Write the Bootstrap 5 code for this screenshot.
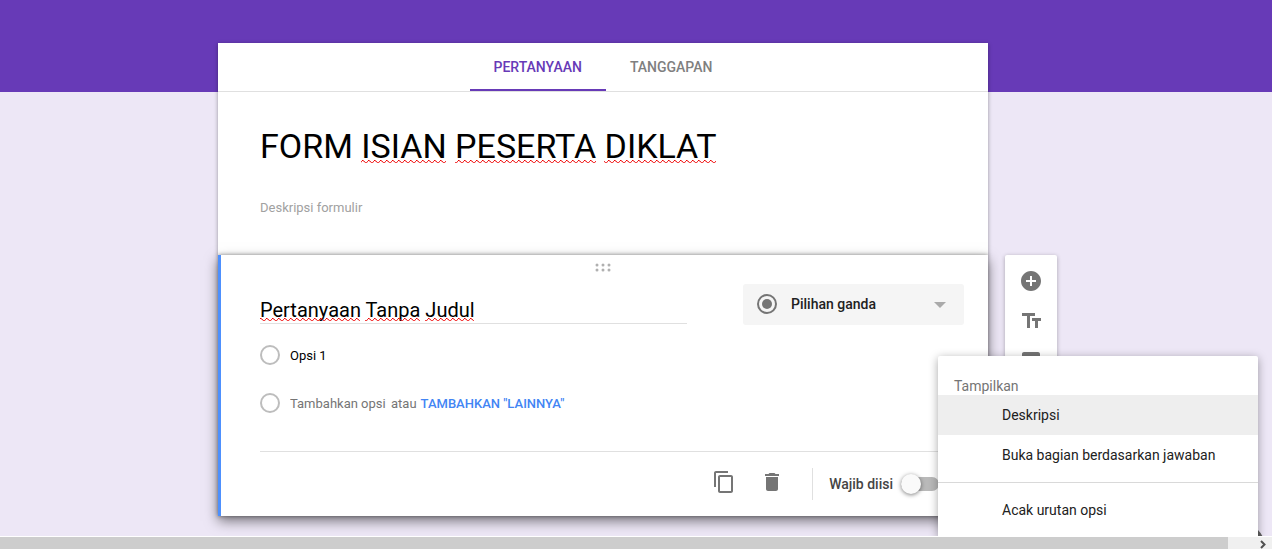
<!DOCTYPE html>
<html lang="id">
<head>
<meta charset="utf-8">
<meta name="viewport" content="width=device-width, initial-scale=1">
<title>Form Isian Peserta Diklat</title>
<link href="https://cdn.jsdelivr.net/npm/bootstrap@5.3.0/dist/css/bootstrap.min.css" rel="stylesheet">
<style>
  body { font-family: Roboto, "Liberation Sans", sans-serif; font-size: 13px; line-height: 20px; color: #212121; background: #ede7f6; }
  svg { display: block; }
  .workspace { background: linear-gradient(#673ab7 92px, #ede7f6 92px); padding-top: 43px; }
  .editor { gap: 17px; padding-left: 3px; }
  .form-column { flex: 0 1 770px; min-width: 0; }
  .form-sheet { background: #fff; box-shadow: 0 1px 4px rgba(0,0,0,.37); }
  .mode-tabs { height: 49px; border-bottom: 1px solid #e0e0e0; }
  .mode-tabs .nav-link { font-size: 14px; font-weight: 500; color: #7f7f7f; padding: 14px 24px 12px; border-bottom: 2px solid transparent; border-radius: 0; }
  .mode-tabs .nav-link.active { color: #673ab7; border-color: #673ab7; }
  .form-head { padding: 30px 42px 37px; }
  .plain-field { display: block; width: 100%; border: 0; padding: 0; background: none; outline: 0; color: #000; }
  .form-title { font-size: 34px; line-height: 48px; height: 48px; }
  .form-desc { font-size: 13px; height: 20px; margin-top: 28px; }
  .form-desc::placeholder { color: #a1a1a1; opacity: 1; }
  .spell { position: absolute; left: 0; bottom: 0; pointer-events: none; }
  .question-card { background: #fff; border-left: 3px solid #4d90fe; padding: 29px 24px 0 39px; box-shadow: 0 0 4px rgba(0,0,0,.4), 0 5px 12px rgba(0,0,0,.5); }
  .drag-handle { position: absolute; top: 8px; left: 0; right: 3px; }
  .question-text { flex: 0 1 427px; margin-top: 14px; border-bottom: 1px solid #e0e0e0; }
  .question-title { font-size: 20px; line-height: 24px; height: 25px; padding-bottom: 2px; }
  .kind { flex: 0 0 221px; height: 41px; }
  .kind select { appearance: none; width: 100%; height: 100%; border: 0; border-radius: 3px; background: #f5f5f5; font-size: 14px; font-weight: 500; color: #212121; padding: 0 48px 2px; }
  .kind svg { position: absolute; pointer-events: none; }
  .kind .kind-icon { left: 14px; top: 10px; }
  .kind .kind-arrow { right: 18px; top: 18px; }
  .option { gap: 10px; height: 20px; }
  .options { gap: 28px; padding-top: 20px; }
  .option input[type=radio] { appearance: none; width: 20px; height: 20px; margin: 0; border: 2px solid #bdbdbd; border-radius: 50%; background: #fff; opacity: 1; }
  .option .plain-field { width: 97px; line-height: 20px; }
  .option-text { padding-top: 2px; }
  .option .add-field::placeholder { color: #757575; opacity: 1; }
  .add-or { color: #757575; padding: 0 4px; }
  .option a { color: #4285f4; font-weight: 500; }
  .card-tools { height: 65px; margin: 38px 0 0; border-top: 1px solid #e0e0e0; padding-right: 25px; }
  .tool-btn { border: 0; background: none; padding: 0; width: 24px; height: 24px; }
  .rule-v { width: 1px; height: 32px; background: #e0e0e0; margin: 0 16px 0 28px; }
  .required-label { font-size: 14px; font-weight: 500; color: #444; }
  .toggle { appearance: none; position: relative; width: 38px; height: 20px; margin: 0; }
  .toggle::before { content: ""; position: absolute; inset: 3px 0; background: #b9b9b9; border-radius: 7px; }
  .toggle::after { content: ""; position: absolute; left: 0; top: 0; width: 20px; height: 20px; border-radius: 50%; background: #fafafa; box-shadow: 0 1px 4px rgba(0,0,0,.5); }
  .side-tools { flex: 0 0 52px; margin-top: 212px; padding: 14px 0; gap: 16px; border-radius: 2px; background: #fff; box-shadow: 0 1px 4px rgba(0,0,0,.3); }
  .more-menu { position: absolute; z-index: 5; left: 717px; top: 101px; width: 320px; padding: 20px 0 8px; background: #fff; border-radius: 2px; box-shadow: 0 2px 10px rgba(0,0,0,.35); font-size: 14px; }
  .menu-caption { color: #757575; padding: 0 16px; height: 19px; }
  .more-menu button { display: block; width: 100%; height: 40px; border: 0; background: #fff; color: #212121; text-align: left; padding: 0 64px; white-space: nowrap; }
  .more-menu button.current { background: #eee; }
  .more-menu hr { margin: 7px 0; border-color: #d9d9d9; opacity: 1; }
  .help { position: absolute; right: 7px; bottom: -35px; width: 48px; height: 48px; border: 0; border-radius: 50%; background: #616161; }
  .h-scroll { height: 13px; border-top: 1px solid #fff; background: #f0f0f0; padding-right: 44px; }
  .h-scroll .thumb { width: 100%; background: #cdcdcd; }
  .h-scroll button { position: absolute; right: 0; top: 0; width: 17px; height: 12px; padding: 0; border: 0; background: none; }
</style>
</head>
<body>
<div class="vh-100 d-flex flex-column overflow-hidden">
  <main class="workspace flex-grow-1 overflow-hidden position-relative">
    <button class="help" type="button" aria-label="Bantuan"></button>
    <div class="editor d-flex justify-content-center align-items-start position-relative">
      <div class="form-column">
        <div class="form-sheet">
          <nav class="mode-tabs nav justify-content-center">
            <a class="nav-link active" href="#pertanyaan">PERTANYAAN</a>
            <a class="nav-link" href="#tanggapan">TANGGAPAN</a>
          </nav>
          <header class="form-head">
            <div class="position-relative">
              <input class="plain-field form-title" type="text" value="FORM ISIAN PESERTA DIKLAT" aria-label="Judul formulir" spellcheck="false">
              <svg class="spell" width="457" height="10" aria-hidden="true">
                <defs><pattern id="wave" width="6" height="3" patternUnits="userSpaceOnUse"><path d="M-1 .5H1L3.500 2.500H4.500L7 .5" fill="none" stroke="#e00" stroke-width="1"/></pattern></defs>
                <path d="M101 0H186V3H101zM195 0H336V3H195zM344 0H456V3H344z" fill="url(#wave)"/>
              </svg>
            </div>
            <input class="plain-field form-desc" type="text" placeholder="Deskripsi formulir" aria-label="Deskripsi formulir">
          </header>
        </div>
        <section class="question-card position-relative">
          <svg class="drag-handle mx-auto" width="16" height="9" viewBox="0 0 16 9" fill="#b0b0b0" aria-hidden="true"><circle cx="2" cy="2" r="1.500"/><circle cx="8" cy="2" r="1.500"/><circle cx="14" cy="2" r="1.500"/><circle cx="2" cy="7" r="1.500"/><circle cx="8" cy="7" r="1.500"/><circle cx="14" cy="7" r="1.500"/></svg>
          <div class="d-flex justify-content-between align-items-start">
            <div class="question-text position-relative">
              <input class="plain-field question-title" type="text" value="Pertanyaan Tanpa Judul" aria-label="Pertanyaan" spellcheck="false">
              <svg class="spell" width="215" height="5" aria-hidden="true"><path d="M0 0H100V3H0zM105 0H160V3H105zM165 0H214V3H165z" fill="url(#wave)"/></svg>
            </div>
            <div class="kind position-relative">
              <svg class="kind-icon" width="20" height="20" viewBox="0 0 20 20" aria-hidden="true"><circle cx="10" cy="10" r="9" fill="none" stroke="#757575" stroke-width="2"/><circle cx="10" cy="10" r="5" fill="#757575"/></svg>
              <select aria-label="Jenis pertanyaan"><option>Pilihan ganda</option></select>
              <svg class="kind-arrow" width="12" height="6" viewBox="0 0 12 6" aria-hidden="true"><path d="M0 0H12L6 6z" fill="#aaa"/></svg>
            </div>
          </div>
          <div class="options d-flex flex-column">
            <div class="option d-flex align-items-center">
              <input type="radio" name="opsi" aria-label="Opsi 1">
              <div class="option-text">
                <input class="plain-field" type="text" value="Opsi 1" aria-label="Teks opsi 1" spellcheck="false">
              </div>
            </div>
            <div class="option d-flex align-items-center">
              <input type="radio" name="opsi" aria-label="Tambahkan opsi">
              <div class="option-text d-flex align-items-center">
                <input class="plain-field add-field" type="text" placeholder="Tambahkan opsi" aria-label="Tambahkan opsi">
                <span class="add-or">atau</span>
                <a class="text-decoration-none" href="#lainnya">TAMBAHKAN "LAINNYA"</a>
              </div>
            </div>
          </div>
          <div class="card-tools d-flex align-items-center justify-content-end">
            <button class="tool-btn mb-1" type="button" aria-label="Duplikat"><svg width="24" height="24" viewBox="0 0 24 24" fill="#757575"><path d="M16 1H4c-1.100 0-2 .9-2 2v14h2V3h12V1zm3 4H8c-1.100 0-2 .9-2 2v14c0 1.100.9 2 2 2h11c1.100 0 2-.9 2-2V7c0-1.100-.9-2-2-2zm0 16H8V7h11v14z"/></svg></button>
            <button class="tool-btn ms-4 mb-1" type="button" aria-label="Hapus"><svg width="24" height="24" viewBox="0 0 24 24" fill="#757575"><path d="M6 19c0 1.100.9 2 2 2h8c1.100 0 2-.9 2-2V7H6v12zM19 4h-3.500l-1-1h-5l-1 1H5v2h14V4z"/></svg></button>
            <span class="rule-v"></span>
            <label class="required-label me-2" for="required">Wajib diisi</label>
            <input class="toggle" type="checkbox" role="switch" id="required">
          </div>
          <div class="more-menu" role="menu">
            <div class="menu-caption">Tampilkan</div>
            <button class="current" type="button" role="menuitem">Deskripsi</button>
            <button type="button" role="menuitem">Buka bagian berdasarkan jawaban</button>
            <hr>
            <button type="button" role="menuitem">Acak urutan opsi</button>
          </div>
        </section>
      </div>
      <aside class="side-tools d-flex flex-column align-items-center">
        <button class="tool-btn" type="button" aria-label="Tambahkan pertanyaan"><svg width="24" height="24" viewBox="0 0 24 24" fill="#757575"><path d="M12 2C6.480 2 2 6.480 2 12s4.480 10 10 10 10-4.480 10-10S17.520 2 12 2zm5 11h-4v4h-2v-4H7v-2h4V7h2v4h4v2z"/></svg></button>
        <button class="tool-btn" type="button" aria-label="Tambahkan judul"><svg width="24" height="24" viewBox="0 0 24 24" fill="#757575"><path d="M3 4h13v3h-5v12H8V7H3zM13 9h9v3h-3v7h-3v-7h-3z"/></svg></button>
        <button class="tool-btn" type="button" aria-label="Tambahkan gambar"><svg width="24" height="24" viewBox="0 0 24 24" fill="#757575"><path d="M21 19V5c0-1.100-.9-2-2-2H5c-1.100 0-2 .9-2 2v14c0 1.100.9 2 2 2h14c1.100 0 2-.9 2-2zM8.500 13.500l2.500 3 3.500-4.500 4.500 6H5l3.500-4.500z"/></svg></button>
      </aside>
    </div>
  </main>
  <div class="h-scroll position-relative d-flex flex-shrink-0">
    <div class="thumb"></div>
    <button type="button" aria-label="Gulir ke kanan"><svg width="17" height="12" viewBox="0 0 17 12" fill="none" stroke="#505050" stroke-width="2"><path d="M6 4l3.500 3.500L6 11"/></svg></button>
  </div>
</div>
<script src="https://cdn.jsdelivr.net/npm/bootstrap@5.3.0/dist/js/bootstrap.bundle.min.js"></script>
</body>
</html>
